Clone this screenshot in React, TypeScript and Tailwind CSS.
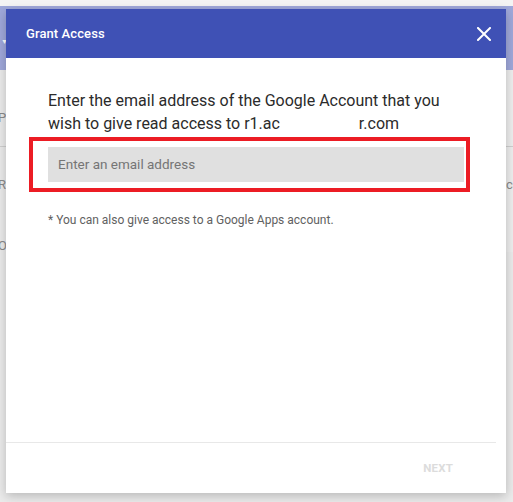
import React from "react";

export default function App() {
  return (
    <div
      className="relative w-[513px] h-[502px] overflow-hidden bg-[#ebebeb]"
      style={{ fontFamily: "Roboto, 'Liberation Sans', sans-serif" }}
    >
      {/* background page */}
      <div className="h-[6px] bg-[#f4f4f4]" />
      <div className="h-[64px] bg-[#9fa8da] relative">
        <span className="absolute left-[1px] top-[33px] text-[7px] text-white leading-none">▼</span>
      </div>
      <div className="flex justify-between text-[13px] text-[#8a8a8a]">
        <div className="flex flex-col w-[6px] overflow-hidden">
          <div className="h-[76px] pt-[41px] leading-none -ml-[2px]">Pe</div>
          <div className="h-px bg-[#cfcfcf] w-full" />
          <div className="pt-[31px] leading-none -ml-[2px]">Re</div>
          <div className="pt-[48px] leading-none -ml-[2px]">Ov</div>
        </div>
        <div className="flex flex-col w-[7px] overflow-hidden bg-[#eeeeee]">
          <div className="h-[76px]" />
          <div className="h-px bg-[#cfcfcf] w-full" />
          <div className="pt-[31px] leading-none">ca</div>
        </div>
      </div>

      {/* dialog */}
      <div className="absolute left-[6px] top-[9px] w-[500px] h-[484px] bg-white flex flex-col shadow-[0_3px_10px_rgba(0,0,0,0.22)]">
        <div className="h-[49px] bg-[#3f51b5] flex items-center justify-between pl-[20px] pr-[15px]">
          <span className="text-white text-[13px] font-medium tracking-[0.1px]">Grant Access</span>
          <svg width="14" height="14" viewBox="0 0 14 14" className="mt-[1px]">
            <path d="M1 1L13 13M13 1L1 13" stroke="white" strokeWidth="2" strokeLinecap="square" />
          </svg>
        </div>
        <div className="flex-1 pl-[42px] pr-[36px] pt-[31px]">
          <p className="text-[16px] leading-[23px] text-[#2b2b2b]">
            Enter the email address of the Google Account that you wish to give read access to r1.ac
            <span className="inline-block w-[79px]" />
            r.com
          </p>
          <div className="mt-[12px] h-[35px] w-[416px] bg-[#e0e0e0] flex items-center pl-[10px] text-[13.5px] text-[#757575]">
            Enter an email address
          </div>
          <p className="mt-[31px] text-[12px] text-[#616161] leading-[14px]">
            * You can also give access to a Google Apps account.
          </p>
        </div>
        <div className="h-px bg-[#e8e8e8] w-[490px]" />
        <div className="h-[50px] flex items-center justify-end pr-[53px]">
          <span className="text-[11.5px] font-bold text-[#dcdcdc] tracking-[0.2px] mt-[1px]">NEXT</span>
        </div>

        {/* annotation */}
        <div className="absolute left-[23px] top-[128px] w-[441px] h-[55px] border-[4px] border-[#ec1c24]" />
      </div>
    </div>
  );
}
